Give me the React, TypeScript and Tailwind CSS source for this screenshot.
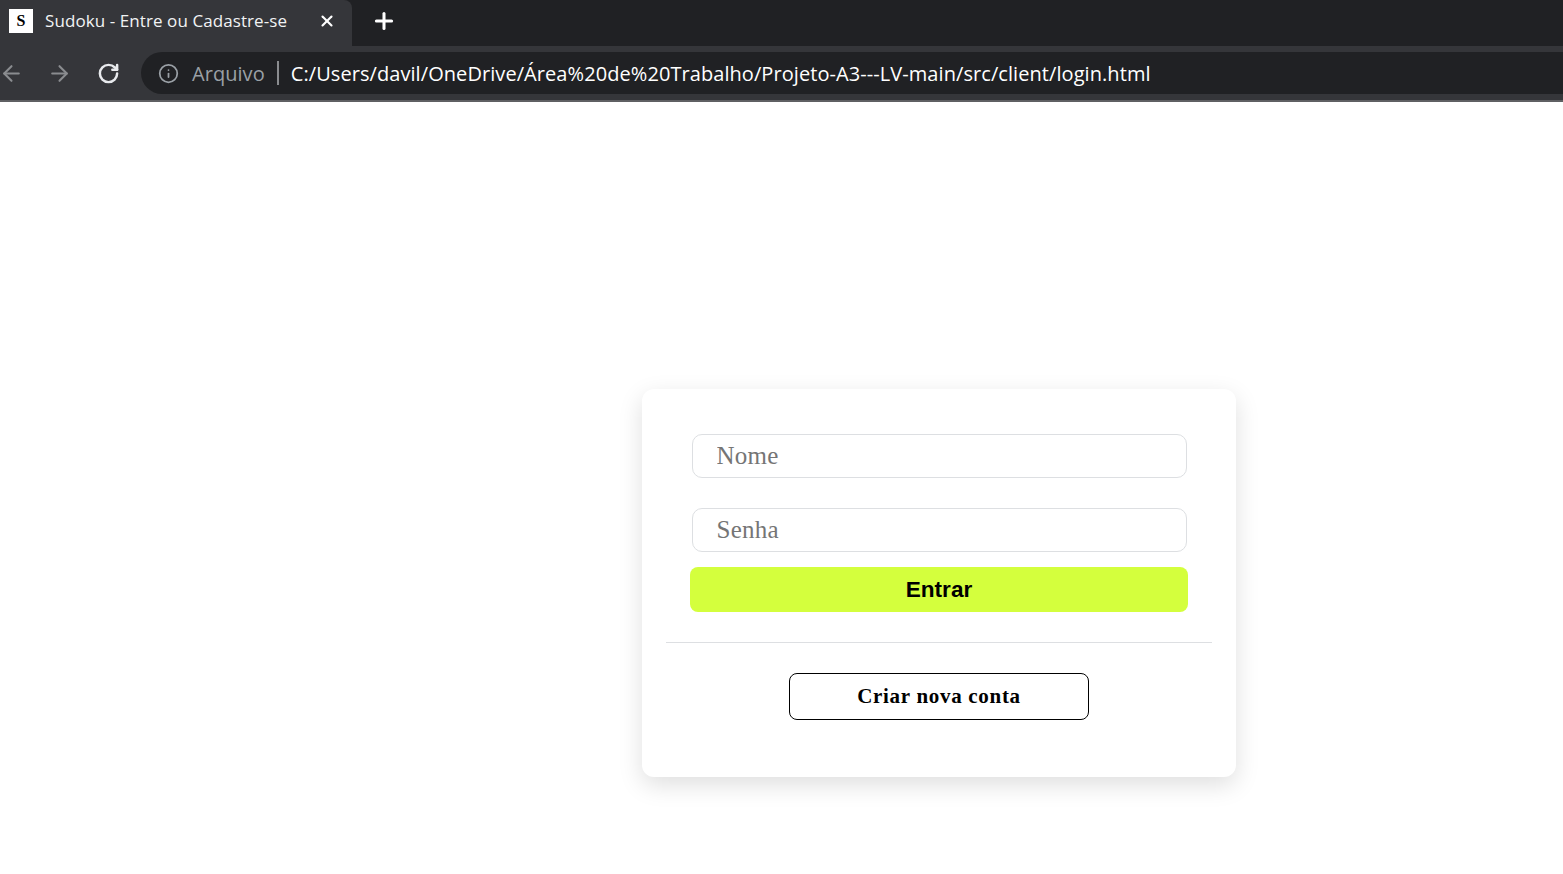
import React from "react";
import { ArrowLeft, ArrowRight, Info, Plus, RotateCw, X } from "lucide-react";

const chromeFont = "font-['Open_Sans','Noto_Sans',sans-serif]";

const BrowserBar = () => (
  <div className={`${chromeFont} bg-[#35363a] border-b-2 border-[#5f6063]`}>
    {/* tab strip */}
    <div className="flex h-[46px] bg-[#202124]">
      <div className="flex w-[352px] items-center bg-[#35363a] pb-[4px] pl-[9px] rounded-tr-lg">
        <div className="flex h-6 w-6 items-center justify-center bg-white font-['Liberation_Serif',serif] text-[16px] font-bold text-black">
          S
        </div>
        <span className="ml-3 w-[273px] text-[17px] tracking-[0.08px] whitespace-nowrap text-[#f1f3f4]">
          Sudoku - Entre ou Cadastre-se
        </span>
        <X size={18} strokeWidth={2.8} className="text-white" />
      </div>
      <div className="flex items-center pb-[4px] pl-[19px]">
        <Plus size={26} strokeWidth={2.8} className="text-white" />
      </div>
    </div>
    {/* address bar */}
    <div className="flex h-[54px] items-center">
      <div className="flex w-[141px] items-center text-[#8a8c8f]">
        <ArrowLeft size={25} strokeWidth={2} className="-ml-[1px]" />
        <ArrowRight size={25} strokeWidth={2} className="ml-[23px]" />
        <RotateCw size={23} strokeWidth={2.6} className="ml-[25px] text-[#e8eaed]" />
      </div>
      <div className="flex h-[42px] flex-1 items-center rounded-l-[21px] bg-[#202124] pl-[17px]">
        <Info size={21} strokeWidth={2} className="text-[#9aa0a6]" />
        <span className="ml-[13px] pt-px text-[20px] tracking-[0.05px] text-[#9aa0a6]">Arquivo</span>
        <span className="ml-3 h-6 w-[2px] bg-[#8a8c8f]" />
        <span className="ml-[12px] pt-px text-[20px] tracking-[0.07px] whitespace-nowrap text-white">
          C:/Users/davil/OneDrive/Área%20de%20Trabalho/Projeto-A3---LV-main/src/client/login.html
        </span>
      </div>
    </div>
  </div>
);

const Field = ({ placeholder }: { placeholder: string }) => (
  <input
    placeholder={placeholder}
    className="h-11 w-[495px] rounded-[10px] border border-[#dddfe2] bg-white px-6 font-['Liberation_Serif',serif] text-[25px] tracking-[0.25px] text-black outline-none placeholder:text-[#757575]"
  />
);

export default function App() {
  return (
    <div className="min-h-[874px] bg-white">
      <BrowserBar />
      <div className="flex justify-end pt-[287px] pr-[327px]">
        <div className="flex h-[388px] w-[594px] flex-col items-center rounded-xl bg-white pt-[45px] shadow-[0_8px_24px_rgba(0,0,0,0.13)]">
          <Field placeholder="Nome" />
          <div className="mt-[30px]">
            <Field placeholder="Senha" />
          </div>
          <button className="mt-[15px] h-[45px] w-[498px] rounded-lg bg-[#d4ff3d] font-['Liberation_Sans',sans-serif] text-[22.6px] font-bold text-black">
            Entrar
          </button>
          <div className="mt-[30px] h-px w-[546px] bg-[#dddfe2]" />
          <button className="mt-[30px] h-[47px] w-[300px] rounded-lg border border-black bg-white pt-px font-['Liberation_Serif',serif] text-[21px] font-bold tracking-[0.7px] text-black">
            Criar nova conta
          </button>
        </div>
      </div>
    </div>
  );
}
